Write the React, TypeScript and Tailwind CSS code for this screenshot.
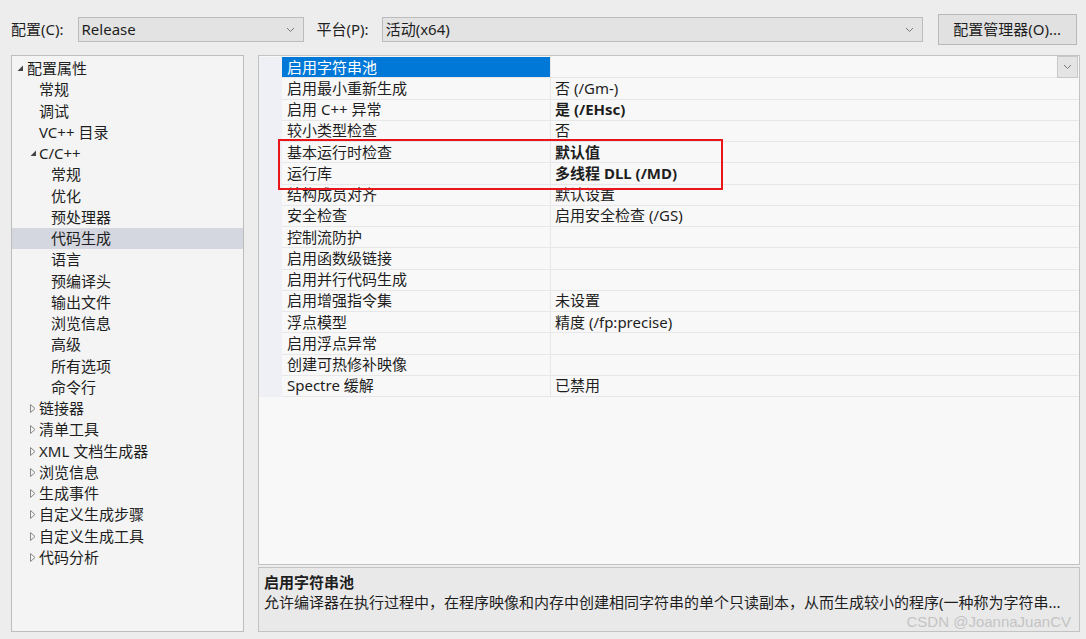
import React from "react";

const FONT = { fontFamily: '"Segoe UI", "Noto Sans", "Noto Sans CJK SC", sans-serif' };

type TreeItem = { label: string; level: number; toggle?: "open" | "closed"; selected?: boolean };

const TREE: TreeItem[] = [
  { label: "配置属性", level: 0, toggle: "open" },
  { label: "常规", level: 1 },
  { label: "调试", level: 1 },
  { label: "VC++ 目录", level: 1 },
  { label: "C/C++", level: 1, toggle: "open" },
  { label: "常规", level: 2 },
  { label: "优化", level: 2 },
  { label: "预处理器", level: 2 },
  { label: "代码生成", level: 2, selected: true },
  { label: "语言", level: 2 },
  { label: "预编译头", level: 2 },
  { label: "输出文件", level: 2 },
  { label: "浏览信息", level: 2 },
  { label: "高级", level: 2 },
  { label: "所有选项", level: 2 },
  { label: "命令行", level: 2 },
  { label: "链接器", level: 1, toggle: "closed" },
  { label: "清单工具", level: 1, toggle: "closed" },
  { label: "XML 文档生成器", level: 1, toggle: "closed" },
  { label: "浏览信息", level: 1, toggle: "closed" },
  { label: "生成事件", level: 1, toggle: "closed" },
  { label: "自定义生成步骤", level: 1, toggle: "closed" },
  { label: "自定义生成工具", level: 1, toggle: "closed" },
  { label: "代码分析", level: 1, toggle: "closed" },
];

const PROPS: { name: string; value: string; bold?: boolean }[] = [
  { name: "启用字符串池", value: "" },
  { name: "启用最小重新生成", value: "否 (/Gm-)" },
  { name: "启用 C++ 异常", value: "是 (/EHsc)", bold: true },
  { name: "较小类型检查", value: "否" },
  { name: "基本运行时检查", value: "默认值", bold: true },
  { name: "运行库", value: "多线程 DLL (/MD)", bold: true },
  { name: "结构成员对齐", value: "默认设置" },
  { name: "安全检查", value: "启用安全检查 (/GS)" },
  { name: "控制流防护", value: "" },
  { name: "启用函数级链接", value: "" },
  { name: "启用并行代码生成", value: "" },
  { name: "启用增强指令集", value: "未设置" },
  { name: "浮点模型", value: "精度 (/fp:precise)" },
  { name: "启用浮点异常", value: "" },
  { name: "创建可热修补映像", value: "" },
  { name: "Spectre 缓解", value: "已禁用" },
];

function Chevron() {
  return (
    <svg width="9" height="6" viewBox="0 0 9 6" fill="none">
      <path d="M1 1 L4.5 4.5 L8 1" stroke="#777" strokeWidth="1" />
    </svg>
  );
}

function Toggle({ kind }: { kind: "open" | "closed" }) {
  if (kind === "open") {
    return (
      <svg width="7" height="7" viewBox="0 0 7 7">
        <polygon points="6,0.5 6,6 0.5,6" fill="#444" />
      </svg>
    );
  }
  return (
    <svg width="6" height="9" viewBox="0 0 6 9">
      <polygon points="0.5,0.5 5,4.5 0.5,8.5" fill="none" stroke="#888" strokeWidth="1" />
    </svg>
  );
}

function Select({ value, width }: { value: string; width: string }) {
  return (
    <div
      className={`flex h-[25px] items-center justify-between border border-[#bcbcbc] bg-[#e3e3e3] pl-[3px] pr-[8px] ${width}`}
    >
      <span className="text-[15px] text-[#1e1e1e]">{value}</span>
      <Chevron />
    </div>
  );
}

export default function App() {
  return (
    <div className="flex h-[639px] w-[1086px] flex-col bg-[#ededed] text-[#1e1e1e]" style={FONT}>
      {/* top bar */}
      <div className="flex h-[55px] items-center pl-[11px] pr-[8px] pt-[4px]">
        <span className="mr-[14px] text-[15px]">配置(C):</span>
        <Select value="Release" width="w-[226px]" />
        <span className="ml-[13px] mr-[13px] text-[15px]">平台(P):</span>
        <Select value="活动(x64)" width="w-[541px]" />
        <div className="ml-[15px] flex h-[31px] w-[139px] items-center justify-center border border-[#b9b9b9] bg-[#e1e1e1] text-[15px]">
          配置管理器(O)...
        </div>
      </div>

      <div className="flex flex-1 pb-[7px] pl-[11px] pr-[6px]">
        {/* tree */}
        <div className="w-[233px] border border-[#bdbdbd] bg-[#f4f4f4] pt-[2px]">
          {TREE.map((t, i) => (
            <div
              key={i}
              className={`flex h-[21.25px] items-center text-[15px] ${t.selected ? "bg-[#d4d6e0]" : ""}`}
            >
              <div className="w-[5px] shrink-0" />
              {t.level === 0 && (
                <div className="flex w-[10px] shrink-0 items-center">{t.toggle && <Toggle kind={t.toggle} />}</div>
              )}
              {t.level === 1 && (
                <>
                  <div className="w-[13px] shrink-0" />
                  <div className="flex w-[9px] shrink-0 items-center">{t.toggle && <Toggle kind={t.toggle} />}</div>
                </>
              )}
              {t.level === 2 && <div className="w-[34px] shrink-0" />}
              <span className="whitespace-nowrap leading-none">{t.label}</span>
            </div>
          ))}
        </div>

        {/* right side */}
        <div className="ml-[14px] flex flex-1 flex-col">
          <div className="relative flex-1 border border-[#c3c3c3] bg-[#f8f8f8]">
            <div className="flex pt-[1px]">
              <div className="w-[23px] shrink-0 bg-[#eef0f5]" />
              <div className="flex-1">
                {PROPS.map((p, i) => (
                  <div key={i} className="flex h-[21.25px] border-b border-[#e7e7ea] text-[15px]">
                    <div
                      className={`flex w-[269px] shrink-0 items-center border-r border-[#e7e7ea] pl-[5px] ${
                        i === 0 ? "bg-[#0078d7] text-white" : ""
                      }`}
                    >
                      <span className="whitespace-nowrap leading-none">{p.name}</span>
                    </div>
                    <div className={`flex flex-1 items-center pl-[4px] ${p.bold ? "font-bold" : ""}`}>
                      <span className="whitespace-nowrap leading-none">{p.value}</span>
                    </div>
                  </div>
                ))}
              </div>
            </div>
            {/* dropdown button on selected row */}
            <div className="absolute right-[1px] top-[0px] flex h-[22px] w-[21px] items-center justify-center border border-[#c8c8c8] bg-[#e4e4e4]">
              <Chevron />
            </div>
            {/* highlight box */}
            <div className="absolute left-[19px] top-[83px] h-[51px] w-[445px] border-2 border-[#e8161b]" />
          </div>

          {/* description */}
          <div className="relative mt-[2px] h-[65px] border border-[#c3c3c3] bg-[#e9e9e9] pl-[5px] pt-[4px]">
            <div className="text-[15px] font-bold leading-[20px]">启用字符串池</div>
            <div className="whitespace-nowrap text-[15px] leading-[20px]">
              允许编译器在执行过程中，在程序映像和内存中创建相同字符串的单个只读副本，从而生成较小的程序(一种称为字符串...
            </div>
            <div
              className="absolute bottom-[2px] right-[8px] text-[15px] leading-[15px] text-[#c4c4c4]"
              style={{ fontFamily: '"Liberation Sans", sans-serif' }}
            >
              CSDN @JoannaJuanCV
            </div>
          </div>
        </div>
      </div>
    </div>
  );
}
